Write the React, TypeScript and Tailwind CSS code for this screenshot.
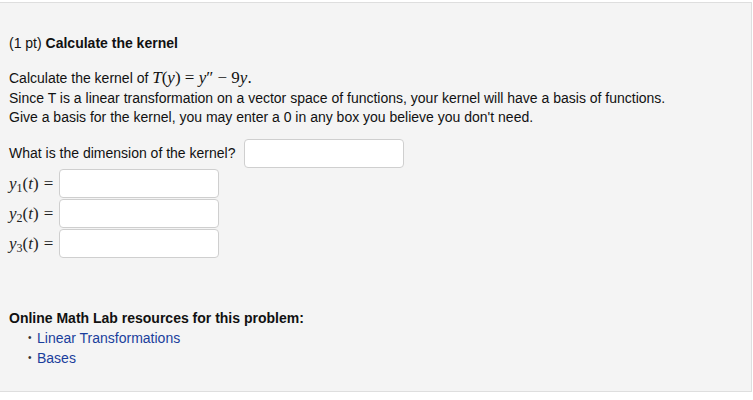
import React from "react";

const sans = { fontFamily: '"Liberation Sans", Arial, Helvetica, sans-serif' };

function Label({ n }: { n: string }) {
  return (
    <span className="font-['Liberation_Serif',serif] text-[17px] text-[#222] w-[50px] shrink-0 whitespace-nowrap leading-none">
      <i>y</i>
      <sub className="text-[12px] not-italic">{n}</sub>
      (<i>t</i>)<span className="ml-[5px]">=</span>
    </span>
  );
}

function Box() {
  return <div className="w-[160px] h-[29px] bg-white border border-[#cfcfcf] rounded-[4px]" />;
}

export default function App() {
  return (
    <div className="bg-white w-[753px] h-[400px] pt-[2px]" style={sans}>
      <div className="bg-[#f4f4f4] border-t border-b border-r border-[#dedede] w-[752px] h-[390px] pl-[9px] pt-[31px] text-[14px] text-[#111]">
        <div className="leading-[19px]">
          (1 pt) <b>Calculate the kernel</b>
        </div>
        <div className="mt-[16px] leading-[19.5px]">
          <div>
            Calculate the kernel of{" "}
            <span className="font-['Liberation_Serif',serif] text-[17px] leading-none">
              <i>T</i>(<i>y</i>) = <i>y</i>″ − 9<i>y</i>.
            </span>
          </div>
          <div>
            Since T is a linear transformation on a vector space of functions, your kernel will have a basis of functions.
          </div>
          <div>Give a basis for the kernel, you may enter a 0 in any box you believe you don't need.</div>
        </div>
        <div className="mt-[11px] flex items-center h-[29px]">
          <span className="mr-[9px]">What is the dimension of the kernel?</span>
          <Box />
        </div>
        <div className="mt-[1px] flex flex-col gap-[1px]">
          {["1", "2", "3"].map((n) => (
            <div key={n} className="flex items-center h-[29px]">
              <Label n={n} />
              <Box />
            </div>
          ))}
        </div>
        <div className="mt-[50px] leading-[20px]">
          <b>Online Math Lab resources for this problem:</b>
          <ul className="ml-[19px]">
            <li className="flex items-center">
              <span className="text-[#333] text-[10px] w-[9px]">•</span>
              <span className="text-[#1a3e9c]">Linear Transformations</span>
            </li>
            <li className="flex items-center">
              <span className="text-[#333] text-[10px] w-[9px]">•</span>
              <span className="text-[#1a3e9c]">Bases</span>
            </li>
          </ul>
        </div>
      </div>
    </div>
  );
}
